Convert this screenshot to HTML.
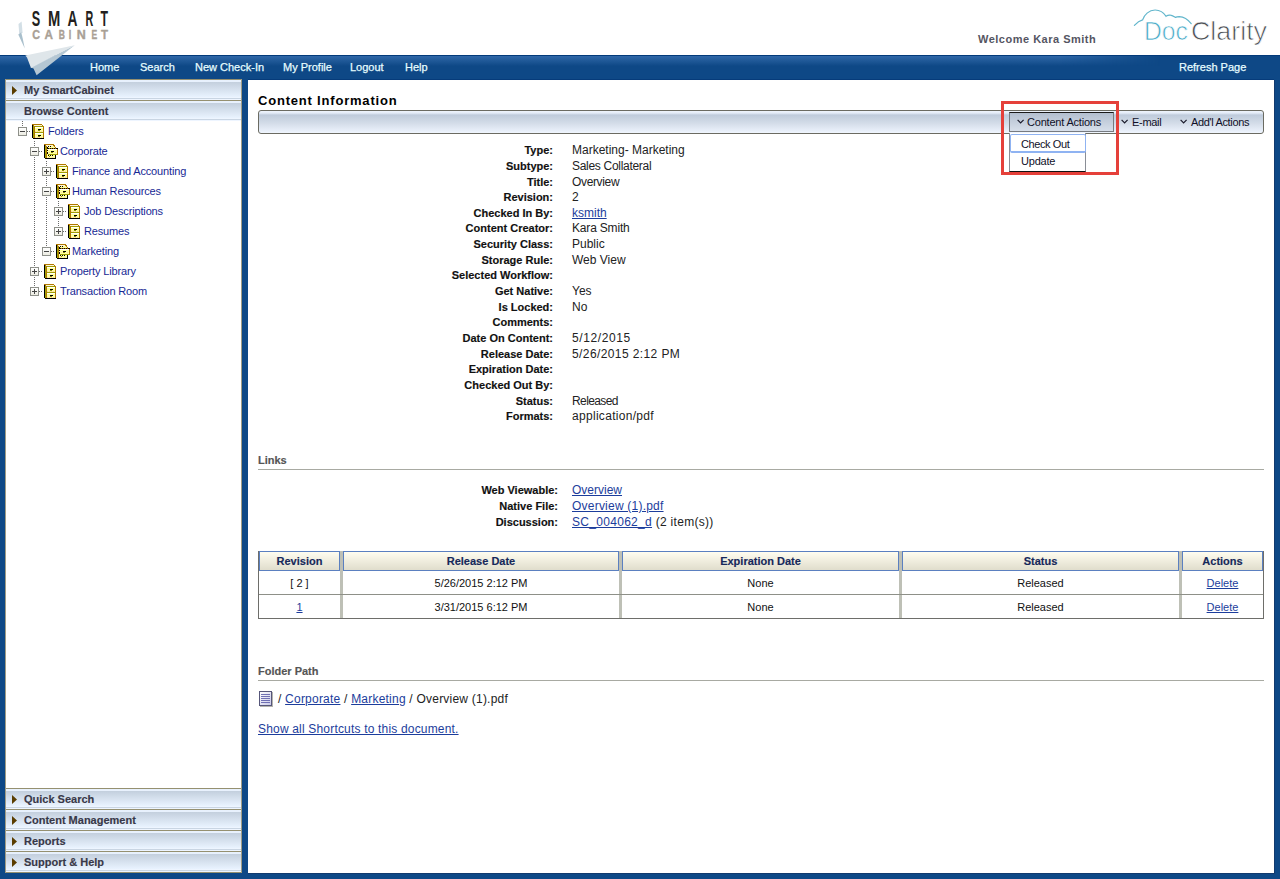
<!DOCTYPE html>
<html><head><meta charset="utf-8">
<style>
*{margin:0;padding:0;box-sizing:border-box}
html,body{width:1280px;height:879px;overflow:hidden;background:#fff;font-family:"Liberation Sans",sans-serif;font-size:11px;color:#222}
.a{position:absolute;white-space:nowrap}
#nav{position:absolute;left:0;top:55px;width:1280px;height:824px;background:#0e4886}
#navtop{position:absolute;left:0;top:55px;width:1280px;height:1px;background:#033a7a}
#navgrad{position:absolute;left:0;top:56px;width:1160px;height:10px;background:linear-gradient(#3068a8,#0e4886);-webkit-mask-image:linear-gradient(90deg,#000 0,#000 1060px,transparent 1160px)}
.nl{position:absolute;top:60px;color:#e6fdff;font-size:11px;line-height:14px;-webkit-text-stroke:0.25px #e6fdff}
#left{position:absolute;left:5px;top:79px;width:237px;height:794px;background:#fff;border:1px solid #a09c84;border-top:none;border-bottom:none}
.ph{position:absolute;left:0;width:235px;height:21px;border-top:1px solid #959070;
 background:linear-gradient(#e8f1fd 0,#e8f1fd 2px,#c3cfdd 2px,#e9f3ff 17px,#f2f7ff 18px,#c9d5e3 18px,#c9d5e3 19px,#eef5ff 19px)}
.ph .t{position:absolute;left:18px;top:3px;font-weight:bold;font-size:11px;line-height:14px;color:#383848}
.tri{position:absolute;left:6px;top:6px}
#content{position:absolute;left:248px;top:80px;width:1026px;height:793px;background:#fff}
.lbl{position:absolute;font-weight:bold;text-align:right;font-size:11px;line-height:14px;color:#111}
.val{position:absolute;font-size:12px;line-height:15px;color:#222}
a,.lnk{color:#1c3d9c;text-decoration:underline}
.tl{position:absolute;color:#172894;font-size:11px;line-height:14px;letter-spacing:-0.15px}

.vd{position:absolute;width:1px;background:repeating-linear-gradient(#6a6a6a 0 1px,transparent 1px 2px)}
.hd{position:absolute;width:3px;height:1px;background:linear-gradient(90deg,#6a6a6a 0 1px,transparent 1px 2px,#6a6a6a 2px 3px)}
.bx{position:absolute;width:9px;height:9px;border:1px solid #8e908a;background:linear-gradient(#ffffff,#ecece2)}
.bx:before{content:"";position:absolute;left:1px;top:3px;width:5px;height:1px;background:#444}
.bx.plus:after{content:"";position:absolute;left:3px;top:1px;width:1px;height:5px;background:#444}
.ic{position:absolute}
.lbl{right:727px}
.val{left:572px}
#tb{position:absolute;left:258px;top:110px;width:1006px;height:24px;border:1px solid #6b6b62;border-radius:3px;
 background:linear-gradient(#eef4fc 0,#e4ecf8 2px,#bfcbdb 4px,#d3dce8 12px,#e9f0fa 20px,#f0f6fe 22px)}
#cab-btn{position:absolute;left:1009px;top:112px;width:105px;height:20px;border:1px solid #767a80;border-top-color:#1a1a1a;
 background:linear-gradient(#b3bfcf,#d7dfea)}
.chev{position:absolute;width:5px;height:5px;border-right:1.3px solid #222;border-bottom:1.3px solid #222;transform:rotate(45deg) scale(0.9)}
.tbt{font-size:11px;line-height:14px;color:#101028;letter-spacing:-0.2px}
#dd{position:absolute;left:1009px;top:133px;width:77px;height:39px;background:#fff;border:1px solid #8a8e96;border-top:none;border-bottom:1px solid #111;box-shadow:0 1px 0 #777}
#ddsel{position:absolute;left:0;top:1px;width:76px;height:19px;border:1px solid #8fb3f2;border-bottom-width:2px;border-radius:2px}
#redbox{position:absolute;left:1001px;top:101px;width:118px;height:74px;border:3px solid #e5403a}
.sec{font-weight:bold;font-size:11px;line-height:14px;color:#555555}
.hr{position:absolute;left:258px;width:1006px;height:1px;background:#a8aaa2}
#rt{position:absolute;left:0;top:0}
.th{position:absolute;top:551px;height:20px;border:1px solid #5b80c0;background:linear-gradient(#fffdf0,#e0ddcc);
 text-align:center;font-weight:bold;font-size:11px;line-height:19px;color:#16285a}
.vg{position:absolute;top:551px;width:3px;height:67px;background:#bec0b6}
.rs{position:absolute;left:259px;width:1004px;height:1px;background:#8e9088}
.td{position:absolute;text-align:center;font-size:11px;line-height:14px;color:#111}
.lbl,.sec,.th,.ph .t{-webkit-text-stroke:0.15px currentColor}
</style></head><body>
<!-- header logo -->
<svg style="position:absolute;left:0;top:0;z-index:5" width="130" height="80">
<g font-family="Liberation Sans" font-weight="bold" font-size="23" fill="#231f20">
<text transform="translate(31.75,26) scale(0.550,0.96)">S</text>
<text transform="translate(47.96,26) scale(0.641,0.96)">M</text>
<text transform="translate(67.40,26) scale(0.600,0.96)">A</text>
<text transform="translate(85.53,26) scale(0.467,0.96)">R</text>
<text transform="translate(100.50,26) scale(0.536,0.96)">T</text>
</g>
<g font-family="Liberation Sans" font-weight="bold" font-size="12" fill="#a9a095" stroke="#a9a095" stroke-width="0.35">
<text transform="translate(32.30,38.6) scale(0.900,1)">C</text>
<text transform="translate(44.50,38.6) scale(0.975,1)">A</text>
<text transform="translate(58.79,38.6) scale(0.714,1)">B</text>
<text transform="translate(68.75,38.6) scale(0.750,1)">I</text>
<text transform="translate(76.66,38.6) scale(1.043,1)">N</text>
<text transform="translate(91.59,38.6) scale(0.714,1)">E</text>
<text transform="translate(101.00,38.6) scale(0.957,1)">T</text>
</g>
<polygon points="18.5,24 21.6,21.5 22.6,33 19.2,33.8" fill="#d3dfe6"/>
<polygon points="18.3,34.5 21.2,32.2 22.6,38 24.8,48.5" fill="#a9bfcc"/>
<polygon points="30.5,67.5 74.7,45.2 36.6,75.2 33.5,68.6" fill="#b5c7d3"/>
<polygon points="25.3,55.4 74.7,45.2 31,68.1 27,57.5" fill="#dfe6ea"/>
</svg>
<div class="a" style="left:978px;top:32px;font-weight:bold;font-size:11px;color:#555562;line-height:14px;letter-spacing:0.5px">Welcome Kara Smith</div>
<svg style="position:absolute;left:1120px;top:0" width="160" height="55">
<g font-family="Liberation Sans" font-size="25.5">
<text x="24" y="39.8" fill="#4aabc8" stroke="#fff" stroke-width="0.7" textLength="44" lengthAdjust="spacingAndGlyphs">Doc</text>
<text x="71" y="39.8" fill="#4a4e53" stroke="#fff" stroke-width="0.7" textLength="76" lengthAdjust="spacingAndGlyphs">Clarity</text>
</g>
<path d="M14.4,25.3 C17,22.5 20,20.5 22.6,19.9 C24,15 29,10 35.1,10 C40,10 44,13 46,16.3 C47.5,15.3 49.5,15 50.5,15.2 C52.5,15.5 54,16.5 55.4,17.4 C56.5,16.8 58,16.6 59.2,16.6 C64,16.8 68,19.5 71.2,23.7" fill="none" stroke="#62b6cc" stroke-width="1.2" stroke-linecap="round"/>
</svg>

<div id="nav"></div>
<div id="navtop"></div>
<div id="navgrad"></div>
<div class="nl" style="left:90px">Home</div>
<div class="nl" style="left:140px">Search</div>
<div class="nl" style="left:195px">New Check-In</div>
<div class="nl" style="left:283px">My Profile</div>
<div class="nl" style="left:350px">Logout</div>
<div class="nl" style="left:405px">Help</div>
<div class="nl" style="left:1179px">Refresh Page</div>

<div id="left">
 <div class="ph" style="top:0"><svg class="tri" width="6" height="10"><polygon points="0,0 5,4.5 0,9" fill="#5a3d00"/></svg><div class="t">My SmartCabinet</div></div>
 <div class="ph" style="top:21px"><div class="t">Browse Content</div></div>
 <div class="ph" style="top:709px"><svg class="tri" width="6" height="10"><polygon points="0,0 5,4.5 0,9" fill="#5a3d00"/></svg><div class="t">Quick Search</div></div>
 <div class="ph" style="top:730px"><svg class="tri" width="6" height="10"><polygon points="0,0 5,4.5 0,9" fill="#5a3d00"/></svg><div class="t">Content Management</div></div>
 <div class="ph" style="top:751px"><svg class="tri" width="6" height="10"><polygon points="0,0 5,4.5 0,9" fill="#5a3d00"/></svg><div class="t">Reports</div></div>
 <div class="ph" style="top:772px"><svg class="tri" width="6" height="10"><polygon points="0,0 5,4.5 0,9" fill="#5a3d00"/></svg><div class="t">Support &amp; Help</div></div>
 <div style="position:absolute;left:0;top:793px;width:235px;height:1px;background:#959070"></div>
</div>

<div id="content"></div>
<div class="a" style="left:248px;top:79px;width:1026px;height:1px;background:#063b7a"></div>
<div class="a" style="left:1274px;top:80px;width:1px;height:794px;background:#123a6e"></div>
<div class="a" style="left:248px;top:873px;width:1027px;height:1px;background:#123a6e"></div>
<svg width="0" height="0" style="position:absolute">
<defs>
<g id="cab" shape-rendering="crispEdges"><rect x="0" y="0" width="10" height="1" fill="#b07800"/><rect x="1" y="1" width="1" height="1" fill="#b07800"/><rect x="2" y="1" width="8" height="1" fill="#fff4dc"/><rect x="10" y="1" width="1" height="1" fill="#b07800"/><rect x="0" y="1" width="1" height="13" fill="#000000"/><rect x="1" y="2" width="1" height="12" fill="#a0a000"/><rect x="2" y="2" width="1" height="13" fill="#b07800"/><rect x="3" y="2" width="8" height="1" fill="#a0a000"/><rect x="11" y="2" width="1" height="13" fill="#b07800"/><rect x="3" y="3" width="8" height="5" fill="#ffff9c"/><rect x="3" y="3" width="8" height="1" fill="#ffffff"/><rect x="3" y="8" width="8" height="1" fill="#a0a000"/><rect x="3" y="9" width="8" height="5" fill="#ffff9c"/><rect x="3" y="9" width="8" height="1" fill="#ffffff"/><rect x="3" y="7" width="1" height="1" fill="#ffd0a8"/><rect x="5" y="7" width="1" height="1" fill="#ffd0a8"/><rect x="7" y="7" width="1" height="1" fill="#ffd0a8"/><rect x="9" y="7" width="1" height="1" fill="#ffd0a8"/><rect x="3" y="13" width="1" height="1" fill="#ffd0a8"/><rect x="5" y="13" width="1" height="1" fill="#ffd0a8"/><rect x="7" y="13" width="1" height="1" fill="#ffd0a8"/><rect x="9" y="13" width="1" height="1" fill="#ffd0a8"/><rect x="6" y="5" width="3" height="1" fill="#000000"/><rect x="6" y="6" width="2" height="1" fill="#8c8c00"/><rect x="6" y="11" width="3" height="1" fill="#000000"/><rect x="6" y="12" width="2" height="1" fill="#8c8c00"/><rect x="1" y="14" width="1" height="1" fill="#000000"/><rect x="2" y="14" width="10" height="1" fill="#000000"/></g>
<g id="cabo" shape-rendering="crispEdges"><rect x="0" y="0" width="10" height="1" fill="#b07800"/><rect x="1" y="1" width="1" height="1" fill="#b07800"/><rect x="2" y="1" width="7" height="1" fill="#fff4dc"/><rect x="9" y="1" width="2" height="1" fill="#b07800"/><rect x="0" y="1" width="1" height="13" fill="#000000"/><rect x="1" y="2" width="1" height="12" fill="#a0a000"/><rect x="2" y="2" width="1" height="13" fill="#b07800"/><rect x="3" y="2" width="8" height="12" fill="#ffff9c"/><rect x="10" y="2" width="1" height="1" fill="#b07800"/><rect x="11" y="3" width="1" height="1" fill="#b07800"/><rect x="3" y="2" width="1" height="1" fill="#fff4dc"/><rect x="4" y="2" width="1" height="1" fill="#000000"/><rect x="6" y="2" width="1" height="1" fill="#000000"/><rect x="3" y="3" width="1" height="1" fill="#000000"/><rect x="3" y="4" width="11" height="1" fill="#000000"/><rect x="5" y="4" width="1" height="1" fill="#b07800"/><rect x="7" y="4" width="1" height="1" fill="#b07800"/><rect x="9" y="4" width="1" height="1" fill="#b07800"/><rect x="11" y="4" width="1" height="1" fill="#b07800"/><rect x="3" y="6" width="1" height="1" fill="#000000"/><rect x="3" y="8" width="1" height="1" fill="#000000"/><rect x="3" y="9" width="1" height="1" fill="#000000"/><rect x="4" y="5" width="9" height="5" fill="#ffff9c"/><rect x="4" y="5" width="9" height="1" fill="#ffffff"/><rect x="13" y="5" width="1" height="6" fill="#b07800"/><rect x="4" y="10" width="9" height="1" fill="#a0a000"/><rect x="7" y="7" width="3" height="1" fill="#000000"/><rect x="7" y="8" width="2" height="1" fill="#8c8c00"/><rect x="5" y="8" width="1" height="1" fill="#ffd0a8"/><rect x="11" y="8" width="1" height="1" fill="#ffd0a8"/><rect x="4" y="11" width="1" height="1" fill="#000000"/><rect x="6" y="11" width="1" height="1" fill="#000000"/><rect x="8" y="11" width="1" height="1" fill="#000000"/><rect x="5" y="12" width="1" height="1" fill="#8c8c00"/><rect x="11" y="11" width="1" height="3" fill="#000000"/><rect x="4" y="13" width="1" height="1" fill="#ffd0a8"/><rect x="8" y="13" width="1" height="1" fill="#ffd0a8"/><rect x="1" y="14" width="1" height="1" fill="#000000"/><rect x="2" y="14" width="10" height="1" fill="#000000"/></g>
</defs></svg>
<div class="vd" style="left:22px;top:121px;height:5px"></div>
<div class="vd" style="left:34px;top:141px;height:145px"></div>
<div class="vd" style="left:46px;top:161px;height:85px"></div>
<div class="vd" style="left:58px;top:201px;height:25px"></div>
<div class="bx minus" style="left:18px;top:127px"></div>
<div class="hd" style="left:27px;top:131px"></div>
<svg class="ic" style="left:32px;top:124px" width="12" height="15"><use href="#cab"/></svg>
<div class="tl" style="left:48px;top:124px">Folders</div>
<div class="bx minus" style="left:30px;top:147px"></div>
<div class="hd" style="left:39px;top:151px"></div>
<svg class="ic" style="left:44px;top:144px" width="14" height="15"><use href="#cabo"/></svg>
<div class="tl" style="left:60px;top:144px">Corporate</div>
<div class="bx plus" style="left:42px;top:167px"></div>
<div class="hd" style="left:51px;top:171px"></div>
<svg class="ic" style="left:56px;top:164px" width="12" height="15"><use href="#cab"/></svg>
<div class="tl" style="left:72px;top:164px">Finance and Accounting</div>
<div class="bx minus" style="left:42px;top:187px"></div>
<div class="hd" style="left:51px;top:191px"></div>
<svg class="ic" style="left:56px;top:184px" width="14" height="15"><use href="#cabo"/></svg>
<div class="tl" style="left:72px;top:184px">Human Resources</div>
<div class="bx plus" style="left:54px;top:207px"></div>
<div class="hd" style="left:63px;top:211px"></div>
<svg class="ic" style="left:68px;top:204px" width="12" height="15"><use href="#cab"/></svg>
<div class="tl" style="left:84px;top:204px">Job Descriptions</div>
<div class="bx plus" style="left:54px;top:227px"></div>
<div class="hd" style="left:63px;top:231px"></div>
<svg class="ic" style="left:68px;top:224px" width="12" height="15"><use href="#cab"/></svg>
<div class="tl" style="left:84px;top:224px">Resumes</div>
<div class="bx minus" style="left:42px;top:247px"></div>
<div class="hd" style="left:51px;top:251px"></div>
<svg class="ic" style="left:56px;top:244px" width="14" height="15"><use href="#cabo"/></svg>
<div class="tl" style="left:72px;top:244px">Marketing</div>
<div class="bx plus" style="left:30px;top:267px"></div>
<div class="hd" style="left:39px;top:271px"></div>
<svg class="ic" style="left:44px;top:264px" width="12" height="15"><use href="#cab"/></svg>
<div class="tl" style="left:60px;top:264px">Property Library</div>
<div class="bx plus" style="left:30px;top:287px"></div>
<div class="hd" style="left:39px;top:291px"></div>
<svg class="ic" style="left:44px;top:284px" width="12" height="15"><use href="#cab"/></svg>
<div class="tl" style="left:60px;top:284px">Transaction Room</div>
<div style="position:absolute;left:258px;top:551px;width:1006px;height:68px;border:1px solid #6e6e6a;border-top:none"></div>

<div class="a" style="left:258px;top:93px;font-weight:bold;font-size:13px;line-height:16px;color:#000;letter-spacing:0.8px">Content Information</div>
<div id="tb"></div>
<div id="cab-btn"></div>
<svg class="a" style="left:1017px;top:119px" width="8" height="6"><polyline points="0.6,0.8 3.6,3.8 6.6,0.8" fill="none" stroke="#1a1a2a" stroke-width="1.2"/></svg>
<div class="a tbt" style="left:1027px;top:115px">Content Actions</div>
<svg class="a" style="left:1121px;top:119px" width="8" height="6"><polyline points="0.6,0.8 3.6,3.8 6.6,0.8" fill="none" stroke="#1a1a2a" stroke-width="1.2"/></svg>
<div class="a tbt" style="left:1132px;top:115px;letter-spacing:-0.3px">E-mail</div>
<svg class="a" style="left:1180px;top:119px" width="8" height="6"><polyline points="0.6,0.8 3.6,3.8 6.6,0.8" fill="none" stroke="#1a1a2a" stroke-width="1.2"/></svg>
<div class="a tbt" style="left:1191px;top:115px;letter-spacing:-0.35px">Add'l Actions</div>
<div id="dd"><div id="ddsel"></div></div>
<div class="a tbt" style="left:1021px;top:137px;letter-spacing:-0.4px">Check Out</div>
<div class="a tbt" style="left:1021px;top:154px">Update</div>
<div id="redbox"></div>
<div class="lbl" style="top:143px">Type:</div><div class="val" style="top:143px">Marketing- Marketing</div>
<div class="lbl" style="top:159px">Subtype:</div><div class="val" style="top:159px;letter-spacing:-0.3px">Sales Collateral</div>
<div class="lbl" style="top:175px">Title:</div><div class="val" style="top:175px;letter-spacing:-0.35px">Overview</div>
<div class="lbl" style="top:190px">Revision:</div><div class="val" style="top:190px">2</div>
<div class="lbl" style="top:206px">Checked In By:</div><div class="val" style="top:206px"><a>ksmith</a></div>
<div class="lbl" style="top:221px">Content Creator:</div><div class="val" style="top:221px;letter-spacing:-0.18px">Kara Smith</div>
<div class="lbl" style="top:237px">Security Class:</div><div class="val" style="top:237px">Public</div>
<div class="lbl" style="top:253px">Storage Rule:</div><div class="val" style="top:253px">Web View</div>
<div class="lbl" style="top:268px">Selected Workflow:</div>
<div class="lbl" style="top:284px">Get Native:</div><div class="val" style="top:284px">Yes</div>
<div class="lbl" style="top:300px">Is Locked:</div><div class="val" style="top:300px">No</div>
<div class="lbl" style="top:315px">Comments:</div>
<div class="lbl" style="top:331px">Date On Content:</div><div class="val" style="top:331px;letter-spacing:0.6px">5/12/2015</div>
<div class="lbl" style="top:347px">Release Date:</div><div class="val" style="top:347px;letter-spacing:0.4px">5/26/2015 2:12 PM</div>
<div class="lbl" style="top:362px">Expiration Date:</div>
<div class="lbl" style="top:378px">Checked Out By:</div>
<div class="lbl" style="top:394px">Status:</div><div class="val" style="top:394px;letter-spacing:-0.6px">Released</div>
<div class="lbl" style="top:409px">Formats:</div><div class="val" style="top:409px;letter-spacing:0.3px">application/pdf</div>
<div class="a sec" style="left:258px;top:453px">Links</div>
<div class="hr" style="top:469px"></div>
<div class="lbl" style="top:483px;right:722px">Web Viewable:</div><div class="val" style="top:483px"><a>Overview</a></div>
<div class="lbl" style="top:499px;right:722px">Native File:</div><div class="val" style="top:499px;letter-spacing:0.22px"><a>Overview (1).pdf</a></div>
<div class="lbl" style="top:515px;right:722px">Discussion:</div><div class="val" style="top:515px;letter-spacing:0.3px"><a>SC_004062_d</a> (2 item(s))</div>

<div id="rt">
 <div class="th" style="left:259px;width:81px">Revision</div>
 <div class="th" style="left:343px;width:276px">Release Date</div>
 <div class="th" style="left:622px;width:277px">Expiration Date</div>
 <div class="th" style="left:902px;width:277px">Status</div>
 <div class="th" style="left:1182px;width:81px">Actions</div>
 <div class="vg" style="left:340px"></div>
 <div class="vg" style="left:619px"></div>
 <div class="vg" style="left:899px"></div>
 <div class="vg" style="left:1179px"></div>
 <div class="rs" style="top:594px"></div>
 <div class="td" style="left:259px;width:81px;top:576px">[ 2 ]</div>
 <div class="td" style="left:343px;width:276px;top:576px">5/26/2015 2:12 PM</div>
 <div class="td" style="left:622px;width:277px;top:576px">None</div>
 <div class="td" style="left:902px;width:277px;top:576px">Released</div>
 <div class="td" style="left:1182px;width:81px;top:576px"><a>Delete</a></div>
 <div class="td" style="left:259px;width:81px;top:600px"><a>1</a></div>
 <div class="td" style="left:343px;width:276px;top:600px">3/31/2015 6:12 PM</div>
 <div class="td" style="left:622px;width:277px;top:600px">None</div>
 <div class="td" style="left:902px;width:277px;top:600px">Released</div>
 <div class="td" style="left:1182px;width:81px;top:600px"><a>Delete</a></div>
</div>

<div class="a sec" style="left:258px;top:664px">Folder Path</div>
<div class="hr" style="top:680px"></div>
<svg class="a" style="left:259px;top:691px" width="14" height="16" shape-rendering="crispEdges">
<defs><linearGradient id="dg" x1="0" y1="0" x2="1" y2="1"><stop offset="0" stop-color="#ffffff"/><stop offset="1" stop-color="#c8c8e8"/></linearGradient></defs>
<rect x="0.5" y="0.5" width="12" height="14" fill="url(#dg)" stroke="#56567a"/>
<rect x="13" y="1" width="1" height="15" fill="#b4b4ae"/><rect x="1" y="15" width="13" height="1" fill="#b4b4ae"/>
<rect x="2" y="3" width="9" height="1" fill="#7070b4"/><rect x="2" y="5" width="9" height="1" fill="#7070b4"/>
<rect x="2" y="7" width="9" height="1" fill="#7070b4"/><rect x="2" y="9" width="9" height="1" fill="#7070b4"/>
<rect x="2" y="11" width="9" height="1" fill="#7070b4"/>
</svg>
<div class="a val" style="left:278px;top:692px;letter-spacing:0.22px">/ <a>Corporate</a> / <a>Marketing</a> / Overview (1).pdf</div>
<div class="a val" style="left:258px;top:722px;letter-spacing:0.18px"><a>Show all Shortcuts to this document.</a></div>

</body></html>
